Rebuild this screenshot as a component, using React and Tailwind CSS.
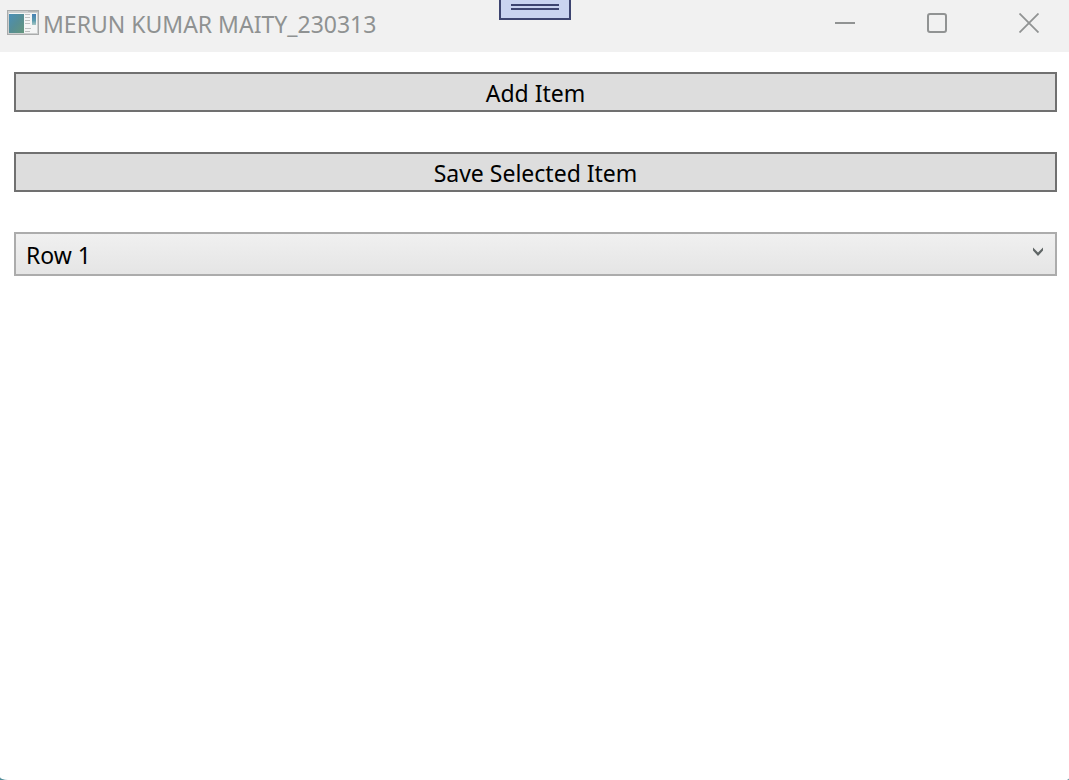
import React, { useState } from "react";

function AppIcon() {
  return (
    <svg width="32" height="26" viewBox="0 0 32 26" aria-hidden="true" className="shrink-0">
      <defs>
        <linearGradient id="pane" x1="0" y1="0" x2="1" y2="1">
          <stop offset="0" stopColor="#4a8fb8" />
          <stop offset="0.5" stopColor="#568e96" />
          <stop offset="1" stopColor="#64967c" />
        </linearGradient>
        <linearGradient id="thumb" x1="0" y1="0" x2="0" y2="1">
          <stop offset="0" stopColor="#4580b4" />
          <stop offset="0.6" stopColor="#5d9cae" />
          <stop offset="1" stopColor="#a5c6c4" />
        </linearGradient>
      </defs>
      <rect x="0" y="0" width="32" height="25" fill="#a9abab" />
      <rect x="1" y="1" width="30" height="23" fill="#cdcfcf" />
      <rect x="2" y="3" width="28" height="20" fill="#f4f5f5" />
      <rect x="21" y="1" width="10" height="1" fill="#b5b7b7" />
      <rect x="2" y="4" width="15" height="19" fill="url(#pane)" />
      <path d="M18 4.500h5M18 7.500h5M18 10.500h5M18 13.500h5M18 18.500h6M18 21.500h5" stroke="#bfc1c1" />
      <rect x="25" y="4" width="4" height="11" fill="url(#thumb)" />
    </svg>
  );
}

function TitleBar() {
  return (
    <header className="relative flex h-[52px] items-start justify-between bg-[#f1f1f1]">
      <div className="flex h-[46px] items-center gap-1 pl-[7px]">
        <AppIcon />
        <h1 className="pt-px text-[23px] leading-7 whitespace-nowrap text-[#8f9292]">
          MERUN KUMAR MAITY_230313
        </h1>
      </div>

      {/* debug toolbar handle */}
      <button
        type="button"
        aria-label="Show toolbar"
        className="absolute top-0 left-1/2 flex h-5 w-[72px] -translate-x-1/2 flex-col items-center gap-[2px] border-2 border-t-0 border-[#3d4470] bg-[#c9d3f0] pt-1"
      >
        <span className="h-[2px] w-12 bg-[#3d4470]" />
        <span className="h-[2px] w-12 bg-[#3d4470]" />
      </button>

      <div className="flex gap-3 text-[#919393]">
        <button type="button" aria-label="Minimize" className="flex h-[46px] w-20 items-center justify-center">
          <svg width="20" height="20" viewBox="0 0 20 20">
            <path d="M0 10h20" stroke="currentColor" strokeWidth="2" />
          </svg>
        </button>
        <button type="button" aria-label="Maximize" className="flex h-[46px] w-20 items-center justify-center">
          <svg width="20" height="20" viewBox="0 0 20 20">
            <rect x="1" y="1" width="18" height="18" rx="2" fill="none" stroke="currentColor" strokeWidth="2" />
          </svg>
        </button>
        <button type="button" aria-label="Close" className="flex h-[46px] w-20 items-center justify-center">
          <svg width="20" height="20" viewBox="0 0 20 20">
            <path d="M0.500 0.500l19 19M19.500 0.500l-19 19" stroke="currentColor" strokeWidth="1.800" />
          </svg>
        </button>
      </div>
    </header>
  );
}

function App() {
  const [rows, setRows] = useState(["Row 1"]);
  const [selected, setSelected] = useState("Row 1");

  const addItem = () => {
    setRows([...rows, `Row ${rows.length + 1}`]);
  };

  const saveItem = () => {
    localStorage.setItem("selectedItem", selected);
  };

  return (
    <div className="min-h-screen bg-[#4f8c98] font-['Noto_Sans',sans-serif]">
      <div className="flex min-h-screen flex-col rounded-br-[4px_2px] rounded-bl-[8px_3px] bg-white">
        <TitleBar />

        <main className="flex flex-col gap-10 pt-5 pr-3 pl-[14px] text-black">
          <button
            type="button"
            onClick={addItem}
            className="h-10 border-2 border-[#707070] bg-[#dddddd] pt-[2px] text-[23px] leading-8"
          >
            Add Item
          </button>

          <button
            type="button"
            onClick={saveItem}
            className="h-10 border-2 border-[#707070] bg-[#dddddd] pt-[2px] text-[23px] leading-8"
          >
            Save Selected Item
          </button>

          <div className="relative">
            <select
              aria-label="Row"
              value={selected}
              onChange={(e) => setSelected(e.target.value)}
              className="block h-11 w-full appearance-none border-2 border-[#acacac] bg-linear-to-b from-[#f0f0f0] to-[#e5e5e5] pt-[2px] pr-8 pl-[10px] text-[23px] leading-8"
            >
              {rows.map((row) => (
                <option key={row}>{row}</option>
              ))}
            </select>
            <svg
              width="12"
              height="10"
              viewBox="0 0 12 10"
              aria-hidden="true"
              className="pointer-events-none absolute top-[15px] right-[13px]"
            >
              <path d="M1 0.500L6 5.500L11 0.500V3.500L6 9L1 3.500Z" fill="#606666" />
            </svg>
          </div>
        </main>
      </div>
    </div>
  );
}

export default App;
